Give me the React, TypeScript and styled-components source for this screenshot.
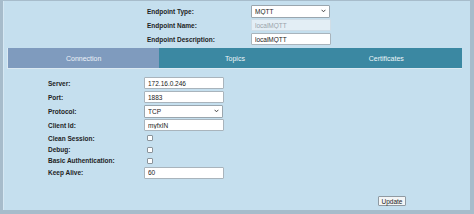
import React from "react";
import styled, { createGlobalStyle } from "styled-components";

const GlobalStyle = createGlobalStyle`
  html, body { margin: 0; padding: 0; }
  body {
    width: 474px;
    height: 214px;
    overflow: hidden;
    background: #a7bccb;
    font-family: "Liberation Sans", Arial, sans-serif;
  }
`;

const Panel = styled.div`
  box-sizing: border-box;
  margin: 1px 4px 0 3px;
  height: 209px;
  background: #c5dfee;
  border-left: 1px solid #d6e8f3;
  display: flex;
  flex-direction: column;
`;

const TopForm = styled.div`
  display: grid;
  grid-template-columns: 104px 82px;
  grid-auto-rows: 14px;
  align-items: center;
  padding: 3px 0 0 143px;
`;

const Form = styled.div`
  display: grid;
  grid-template-columns: 96px 82px;
  align-items: center;
  padding: 7px 0 0 44px;
`;

const Label = styled.label<{ $h?: number }>`
  font-size: 6.5px;
  font-weight: bold;
  color: #1e1e1e;
  height: ${(p) => p.$h ?? 14}px;
  display: flex;
  align-items: center;
`;

const Cell = styled.div<{ $h?: number }>`
  height: ${(p) => p.$h ?? 14}px;
  display: flex;
  align-items: center;
  position: relative;
`;

const TextInput = styled.input<{ $w?: number }>`
  box-sizing: border-box;
  width: ${(p) => p.$w ?? 80}px;
  height: 12px;
  padding: 0 3px;
  margin: 0;
  border: 1px solid #a9b4bc;
  border-radius: 1px;
  background: #ffffff;
  font-family: "Liberation Sans", Arial, sans-serif;
  font-size: 6.5px;
  color: #222;
  outline: none;
  &:disabled {
    background: #e3eef5;
    color: #9aa4ab;
    border-color: #d0dde6;
  }
`;

const Select = styled.select<{ $w?: number }>`
  appearance: none;
  box-sizing: border-box;
  width: ${(p) => p.$w ?? 79}px;
  height: 13px;
  padding: 0 3px;
  margin: 0;
  border: 1px solid #9aa6ae;
  border-radius: 1px;
  background: #ffffff;
  font-family: "Liberation Sans", Arial, sans-serif;
  font-size: 6.5px;
  color: #222;
  outline: none;
`;

const Chevron = styled.svg`
  position: absolute;
  top: 50%;
  margin-top: -2px;
  pointer-events: none;
`;

const Check = styled.input`
  appearance: none;
  box-sizing: border-box;
  width: 6px;
  height: 6px;
  margin: 0 0 0 3px;
  border: 1px solid #8a949b;
  border-radius: 1px;
  background: #fff;
`;

const Tabs = styled.div`
  display: grid;
  grid-template-columns: repeat(3, 1fr);
  margin: 2px 8px 0 3px;
  height: 20px;
  border-bottom: 1px solid #dbe9f2;
  border-left: 1px solid #dbe9f2;
`;

const Tab = styled.div<{ $active?: boolean }>`
  display: flex;
  align-items: center;
  justify-content: center;
  background: ${(p) => (p.$active ? "#7f9bbe" : "#3b88a2")};
  color: ${(p) => (p.$active ? "#edf2f8" : "#eef6f9")};
  font-size: 7px;
`;

const Footer = styled.div`
  display: flex;
  justify-content: flex-end;
  padding: 17px 64px 0 0;
`;

const Button = styled.button`
  box-sizing: border-box;
  height: 10px;
  width: 28px;
  padding: 0;
  border: 1px solid #8f9aa2;
  border-radius: 1px;
  background: #f3f5f6;
  font-family: "Liberation Sans", Arial, sans-serif;
  font-size: 6.5px;
  color: #222;
`;

const Arrow: React.FC<{ right: number }> = ({ right }) => (
  <Chevron width="5" height="4" viewBox="0 0 5 4" style={{ left: right }}>
    <path d="M0.6 0.8 L2.5 2.8 L4.4 0.8" fill="none" stroke="#333" strokeWidth="0.9" />
  </Chevron>
);

export default function App() {
  return (
    <>
      <GlobalStyle />
      <Panel>
        <TopForm>
          <Label>Endpoint Type:</Label>
          <Cell>
            <Select $w={79} defaultValue="MQTT">
              <option>MQTT</option>
            </Select>
            <Arrow right={70} />
          </Cell>
          <Label>Endpoint Name:</Label>
          <Cell>
            <TextInput $w={80} disabled defaultValue="localMQTT" />
          </Cell>
          <Label>Endpoint Description:</Label>
          <Cell>
            <TextInput $w={80} defaultValue="localMQTT" />
          </Cell>
        </TopForm>
        <Tabs>
          <Tab $active>Connection</Tab>
          <Tab>Topics</Tab>
          <Tab>Certificates</Tab>
        </Tabs>
        <Form>
          <Label>Server:</Label>
          <Cell>
            <TextInput defaultValue="172.16.0.246" />
          </Cell>
          <Label>Port:</Label>
          <Cell>
            <TextInput defaultValue="1883" />
          </Cell>
          <Label>Protocol:</Label>
          <Cell>
            <Select $w={79} defaultValue="TCP">
              <option>TCP</option>
            </Select>
            <Arrow right={70} />
          </Cell>
          <Label>Client Id:</Label>
          <Cell>
            <TextInput defaultValue="myfxIN" />
          </Cell>
          <Label $h={12}>Clean Session:</Label>
          <Cell $h={12}>
            <Check type="checkbox" />
          </Cell>
          <Label $h={11}>Debug:</Label>
          <Cell $h={11}>
            <Check type="checkbox" />
          </Cell>
          <Label $h={11}>Basic Authentication:</Label>
          <Cell $h={11}>
            <Check type="checkbox" />
          </Cell>
          <Label $h={13}>Keep Alive:</Label>
          <Cell $h={13}>
            <TextInput defaultValue="60" />
          </Cell>
        </Form>
        <Footer>
          <Button>Update</Button>
        </Footer>
      </Panel>
    </>
  );
}
